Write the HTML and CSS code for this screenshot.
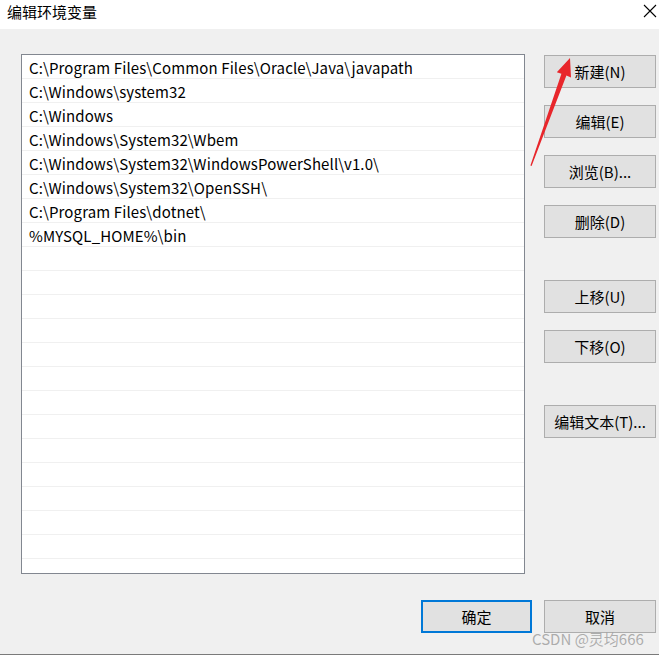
FILE: index.html
```
<!DOCTYPE html>
<html>
    <head>
        <meta charset="utf-8" />
        <title>编辑环境变量</title>
        <link rel="stylesheet" href="styles.css">
    </head>
    <body>
        <div class="window">
            <div class="titlebar">
                <span class="title">编辑环境变量</span>
                <svg class="close" width="14" height="14" viewBox="0 0 14 14">
                    <path d="M1 1 L13 13 M13 1 L1 13" stroke="#000" stroke-width="1.1" fill="none" />
                </svg>
            </div>
            <div class="content">
                <div class="main-row">
                    <div class="listbox">
                        <div class="item">C:\Program Files\Common Files\Oracle\Java\javapath</div>
                        <div class="item">C:\Windows\system32</div>
                        <div class="item">C:\Windows</div>
                        <div class="item">C:\Windows\System32\Wbem</div>
                        <div class="item">C:\Windows\System32\WindowsPowerShell\v1.0\</div>
                        <div class="item">C:\Windows\System32\OpenSSH\</div>
                        <div class="item">C:\Program Files\dotnet\</div>
                        <div class="item">%MYSQL_HOME%\bin</div>
                        <div class="item"></div>
                        <div class="item"></div>
                        <div class="item"></div>
                        <div class="item"></div>
                        <div class="item"></div>
                        <div class="item"></div>
                        <div class="item"></div>
                        <div class="item"></div>
                        <div class="item"></div>
                        <div class="item"></div>
                        <div class="item"></div>
                        <div class="item"></div>
                        <div class="item"></div>
                        <div class="item"></div>
                    </div>
                    <div class="side-buttons">
                        <button class="btn">新建(N)</button>
                        <button class="btn">编辑(E)</button>
                        <button class="btn">浏览(B)...</button>
                        <button class="btn">删除(D)</button>
                        <button class="btn btn-group">上移(U)</button>
                        <button class="btn">下移(O)</button>
                        <button class="btn btn-group">编辑文本(T)...</button>
                    </div>
                </div>
                <div class="footer">
                    <button class="btn btn-default">确定</button>
                    <button class="btn">取消</button>
                </div>
            </div>
        </div>

        <!-- annotation drawn over the dialog -->
        <svg class="arrow" width="659" height="656" viewBox="0 0 659 656">
            <polygon points="570,58 571,77.5 566.4,75.6 531.6,166 530.4,165.6 561.4,73.8 556.8,72.3" fill="#e8262b" />
        </svg>
        <div class="watermark">CSDN @灵均666</div>
    </body>
</html>
```

FILE: styles.css
```
html, body { margin: 0; padding: 0; width: 100%; height: 100%; overflow: hidden }
body {
    background: #fff;
    font-family: "Noto Sans CJK SC", "Noto Sans", sans-serif;
    font-size: 15px;
    color: #000;
    position: relative;
}

.window {
    height: 654px;
    border-bottom: 1px solid #7a7a7a;
    background: #f0f0f0;
    display: flex;
    flex-direction: column;
}

.titlebar {
    height: 29px;
    background: #fff;
    display: flex;
    align-items: center;
    justify-content: space-between;
    padding: 0 2px 0 7px;
}
.title {
    line-height: 20px;
    margin-top: -6px;
}
.close {
    margin-top: -7px;
}

.content {
    flex: 1;
    padding: 25px 3px 0 21px;
}

.main-row {
    display: flex;
    gap: 19px;
}

.listbox {
    width: 502px;
    height: 518px;
    border: 1px solid #828790;
    background: #fff;
    overflow: hidden;
}
.item {
    height: 23px;
    line-height: 25px;
    border-bottom: 1px solid #f0f0f0;
    padding-left: 7px;
    letter-spacing: 0.12px;
    white-space: nowrap;
    overflow: hidden;
}

.side-buttons {
    display: flex;
    flex-direction: column;
    gap: 17px;
    padding-top: 1px;
}

.btn {
    width: 112px;
    height: 33px;
    padding: 0;
    background: #e1e1e1;
    border: 1px solid #adadad;
    font-family: inherit;
    font-size: 15px;
    color: #000;
    border-radius: 0;
}
.btn-group {
    margin-top: 25px;
}
.btn-default {
    border: 2px solid #0078d7;
    width: 111px;
}

.footer {
    display: flex;
    justify-content: flex-end;
    gap: 12px;
    margin-top: 26px;
}

.arrow {
    position: absolute;
    left: 0;
    top: 0;
    pointer-events: none;
}

.watermark {
    position: absolute;
    left: 532px;
    top: 628px;
    font-size: 15px;
    color: rgba(150, 150, 150, 0.75);
    white-space: nowrap;
}
```
